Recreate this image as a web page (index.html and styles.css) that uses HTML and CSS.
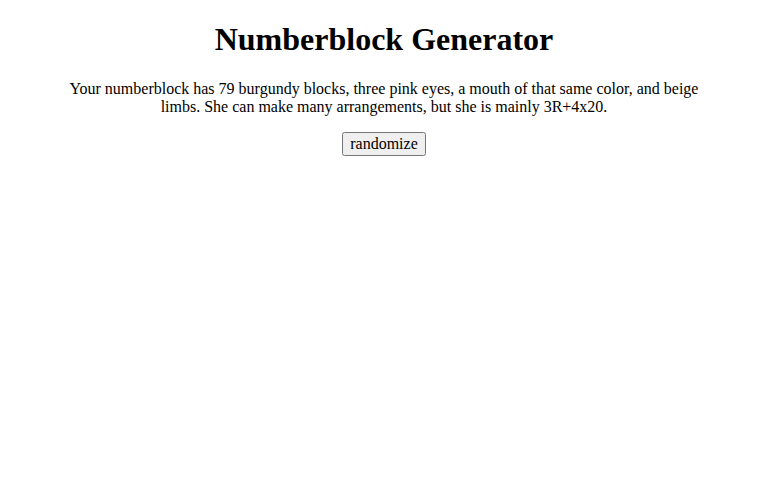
FILE: index.html
```html
<!DOCTYPE html>
<html lang="en">
<head>
<meta charset="UTF-8">
<meta name="viewport" content="width=device-width, initial-scale=1.0">
<title>Numberblock Generator</title>
<link rel="stylesheet" href="styles.css">
</head>
<body>
<h1>Numberblock Generator</h1>
<p id="description">Your numberblock has 79 burgundy blocks, three pink eyes, a mouth of that same color, and beige limbs. She can make many arrangements, but she is mainly 3R+4x20.</p>
<button id="randomize">randomize</button>
</body>
</html>
```

FILE: styles.css
```css
body {
  margin: 0 auto;
  max-width: 640px;
  font-family: "Liberation Serif", "Times New Roman", serif;
  text-align: center;
}
h1 {
  font-size: 32px;
}
button {
  font-family: inherit;
  font-size: 16px;
}
```
